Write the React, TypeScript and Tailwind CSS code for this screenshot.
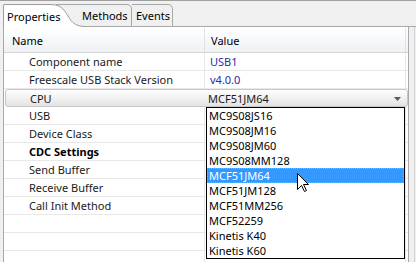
import React from "react";

type Row = { name: string; value?: string; blue?: boolean; cpu?: boolean; bold?: boolean };

const rows: Row[] = [
  { name: "Component name", value: "USB1", blue: true },
  { name: "Freescale USB Stack Version", value: "v4.0.0", blue: true },
  { name: "CPU", value: "MCF51JM64", cpu: true },
  { name: "USB" },
  { name: "Device Class" },
  { name: "CDC Settings", bold: true },
  { name: "Send Buffer" },
  { name: "Receive Buffer" },
  { name: "Call Init Method" },
  { name: "" },
  { name: "" },
  { name: "" },
];

const items = [
  "MC9S08JS16",
  "MC9S08JM16",
  "MC9S08JM60",
  "MC9S08MM128",
  "MCF51JM64",
  "MCF51JM128",
  "MCF51MM256",
  "MCF52259",
  "Kinetis K40",
  "Kinetis K60",
];

export default function App() {
  return (
    <div className="relative w-[416px] h-[262px] overflow-hidden bg-[#f0f0f0] border-t border-[#a0a0a0] font-['Noto_Sans',sans-serif] text-[11px] leading-none text-[#1a1a1a]">
      {/* Tab bar */}
      <div className="flex items-end h-[26px] pl-[3px]">
        <div className="relative z-10 flex items-end">
          <div className="w-[47px] h-[23px] bg-white border-l border-t border-[#9c9c9c] rounded-tl-[2px] flex items-center pl-[3px] text-black">
            <span className="relative z-20 whitespace-nowrap">Properties</span>
          </div>
          <svg width="36" height="23" viewBox="0 0 36 23" className="block">
            <path d="M0 0.5 C10 0.5 13 4 18 12 C22 19 26 22.5 36 22.5 L36 23 L0 23 Z" fill="#ffffff" />
            <path d="M0 0.5 C10 0.5 13 4 18 12 C22 19 26 22.5 36 22.5" fill="none" stroke="#9c9c9c" strokeWidth="1" />
          </svg>
        </div>
        <div className="-ml-[30px] w-[76px] h-[23px] border-t border-r border-b border-[#a8a8a8] rounded-tr-[5px] flex items-center pl-[26px] text-black">
          Methods
        </div>
        <div className="w-[41px] h-[23px] border-t border-r border-b border-[#a8a8a8] rounded-tr-[5px] flex items-center pl-[4px] text-black">
          Events
        </div>
        <div className="flex-1 h-[23px] border-b border-[#a8a8a8]" />
      </div>

      {/* Content */}
      <div className="flex h-[236px]">
        <div className="w-[3px]" />
        <div className="w-[406px] bg-white border-l border-r border-[#a9a9a9] pt-px">
          {/* Header */}
          <div className="flex h-[25px] border-b border-[#d5d5d5] bg-gradient-to-b from-white to-[#eef1f5]">
            <div className="w-[201px] border-r border-[#e2e2e2] flex items-center pl-[8px] text-black">Name</div>
            <div className="w-[201px] border-r border-[#e2e2e2] flex items-center pl-[6px] text-black">Value</div>
          </div>
          {rows.map((r, i) =>
            r.cpu ? (
              <div key={i} className="h-[18px] pl-px">
                <div className="h-full flex rounded-[3px] border border-[#c6c6c6] bg-gradient-to-b from-white to-[#e3e3e3]">
                  <div className="w-[199px] flex items-center pl-[24px]">{r.name}</div>
                  <div className="flex-1 flex items-center pl-[3px] relative">
                    {r.value}
                    <svg width="7" height="4" viewBox="0 0 7 4" className="absolute right-[6px] top-[7px]">
                      <path d="M0 0 L7 0 L3.5 4 Z" fill="#5a5a5a" />
                    </svg>
                  </div>
                </div>
              </div>
            ) : (
              <div key={i} className="flex h-[18px] border-b border-[#e8e8e8]">
                <div
                  className={
                    "w-[201px] border-r border-[#e8e8e8] flex items-center pl-[25px] " +
                    (r.bold ? "font-bold text-black" : "")
                  }
                >
                  {r.name}
                </div>
                <div
                  className={
                    "w-[201px] border-r border-[#e8e8e8] flex items-center pl-[5px] " +
                    (r.blue ? "text-[#2b2ba6]" : "")
                  }
                >
                  {r.value}
                </div>
              </div>
            )
          )}
        </div>
        <div className="flex">
          <div className="w-[5px]" />
          <div className="w-px bg-[#d2d2d2]" />
        </div>
      </div>

      {/* Dropdown list */}
      <div className="absolute left-[206px] top-[106px] w-[199px] h-[152px] bg-white border border-black">
        {items.map((it) =>
          it === "MCF51JM64" ? (
            <div
              key={it}
              className="h-[15px] flex items-center pl-[1px] bg-[#3399ff] text-white border border-dotted border-[#d9a35a]"
            >
              {it}
            </div>
          ) : (
            <div key={it} className="h-[15px] flex items-center pl-[2px] text-black">
              {it}
            </div>
          )
        )}
      </div>

      {/* Mouse cursor */}
      <svg width="13" height="20" viewBox="0 0 13 20" className="absolute left-[297px] top-[172px]">
        <path
          d="M0.5 0.5 L0.5 16.5 L4.5 12.5 L7.5 18.5 L9.5 17.5 L6.5 11.5 L11.5 11.5 Z"
          fill="#ffffff"
          stroke="#000000"
          strokeWidth="1"
          strokeLinejoin="miter"
        />
      </svg>
    </div>
  );
}
